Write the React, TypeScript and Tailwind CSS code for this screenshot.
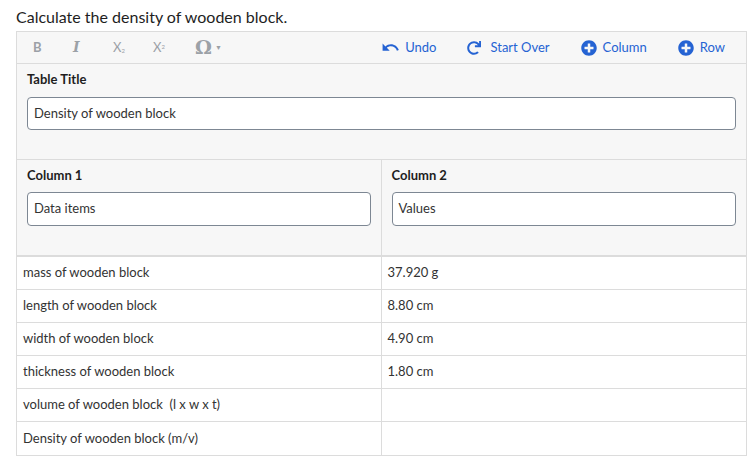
import React from "react";
import { MdUndo } from "react-icons/md";
import { FaRedo, FaPlusCircle } from "react-icons/fa";

const rows: [string, string][] = [
  ["mass of wooden block", "37.920 g"],
  ["length of wooden block", "8.80 cm"],
  ["width of wooden block", "4.90 cm"],
  ["thickness of wooden block", "1.80 cm"],
  ["volume of wooden block  (l x w x t)", ""],
  ["Density of wooden block (m/v)", ""],
];

export default function App() {
  return (
    <div
      className="w-[749px] h-[459px] bg-white text-[#222] overflow-hidden"
      style={{ fontFamily: "Lato, 'Liberation Sans', sans-serif" }}
    >
      <div className="pl-[16px] pt-[5px] h-[31px] text-[16px] leading-[24px] text-[#1e1e1e]">
        Calculate the density of wooden block.
      </div>
      <div className="ml-[16px] w-[731px] border border-[#dcdcdc] bg-[#f7f7f7]">
        <div className="h-[32px] border-b border-[#dcdcdc] flex items-center text-[#9ca1a7]">
          <div className="flex items-center pl-[16px]">
            <span className="w-[40px] text-[13px] font-bold">B</span>
            <span className="w-[40px] text-[14px] font-bold italic" style={{ fontFamily: "'DejaVu Serif', serif" }}>I</span>
            <span className="w-[40px] text-[13px]">
              X<sub className="text-[6px]">2</sub>
            </span>
            <span className="w-[42px] text-[13px]">
              X<sup className="text-[6px]">2</sup>
            </span>
            <span className="text-[19px] font-bold leading-none" style={{ fontFamily: "'DejaVu Serif', serif" }}>Ω</span>
            <span className="ml-[3px] text-[7px]">▼</span>
          </div>
          <div className="ml-auto flex items-center text-[13px] text-[#2563d3]">
            <MdUndo className="w-[19px] h-[19px]" />
            <span className="ml-[5px]">Undo</span>
            <FaRedo className="ml-[31px] w-[14px] h-[14px]" />
            <span className="ml-[9px]">Start Over</span>
            <FaPlusCircle className="ml-[31px] w-[16px] h-[16px]" />
            <span className="ml-[6px]">Column</span>
            <FaPlusCircle className="ml-[31px] w-[16px] h-[16px]" />
            <span className="ml-[6px] mr-[21px]">Row</span>
          </div>
        </div>
        <div className="px-[10px] pt-[6px] pb-[29px] border-b border-[#dcdcdc]">
          <div className="text-[13px] font-bold leading-[18px] text-[#1e1e1e]">Table Title</div>
          <div className="mt-[9px] h-[33px] bg-white border border-[#7d8793] rounded-[4px] flex items-center px-[6px] text-[13px] text-[#333]">
            Density of wooden block
          </div>
        </div>
        <div className="grid grid-cols-2">
          <div className="px-[10px] pt-[6px] h-[97px] border-r border-b-2 border-[#dcdcdc]">
            <div className="text-[13px] font-bold leading-[18px] text-[#1e1e1e]">Column 1</div>
            <div className="mt-[8px] h-[34px] bg-white border border-[#7d8793] rounded-[4px] flex items-center px-[6px] text-[13px] text-[#333]">
              Data items
            </div>
          </div>
          <div className="px-[10px] pt-[6px] h-[97px] border-b-2 border-[#dcdcdc]">
            <div className="text-[13px] font-bold leading-[18px] text-[#1e1e1e]">Column 2</div>
            <div className="mt-[8px] h-[34px] bg-white border border-[#7d8793] rounded-[4px] flex items-center px-[6px] text-[13px] text-[#333]">
              Values
            </div>
          </div>
          {rows.map(([a, b], i) => (
            <React.Fragment key={i}>
              <div className={`bg-white h-[33px] flex items-center pl-[6px] text-[13px] text-[#333] border-r border-[#dcdcdc] whitespace-pre ${i < rows.length - 1 ? "border-b" : ""}`}>
                {a}
              </div>
              <div className={`bg-white h-[33px] flex items-center pl-[6px] text-[13px] text-[#333] border-[#dcdcdc] ${i < rows.length - 1 ? "border-b" : ""}`}>
                {b}
              </div>
            </React.Fragment>
          ))}
        </div>
      </div>
    </div>
  );
}
